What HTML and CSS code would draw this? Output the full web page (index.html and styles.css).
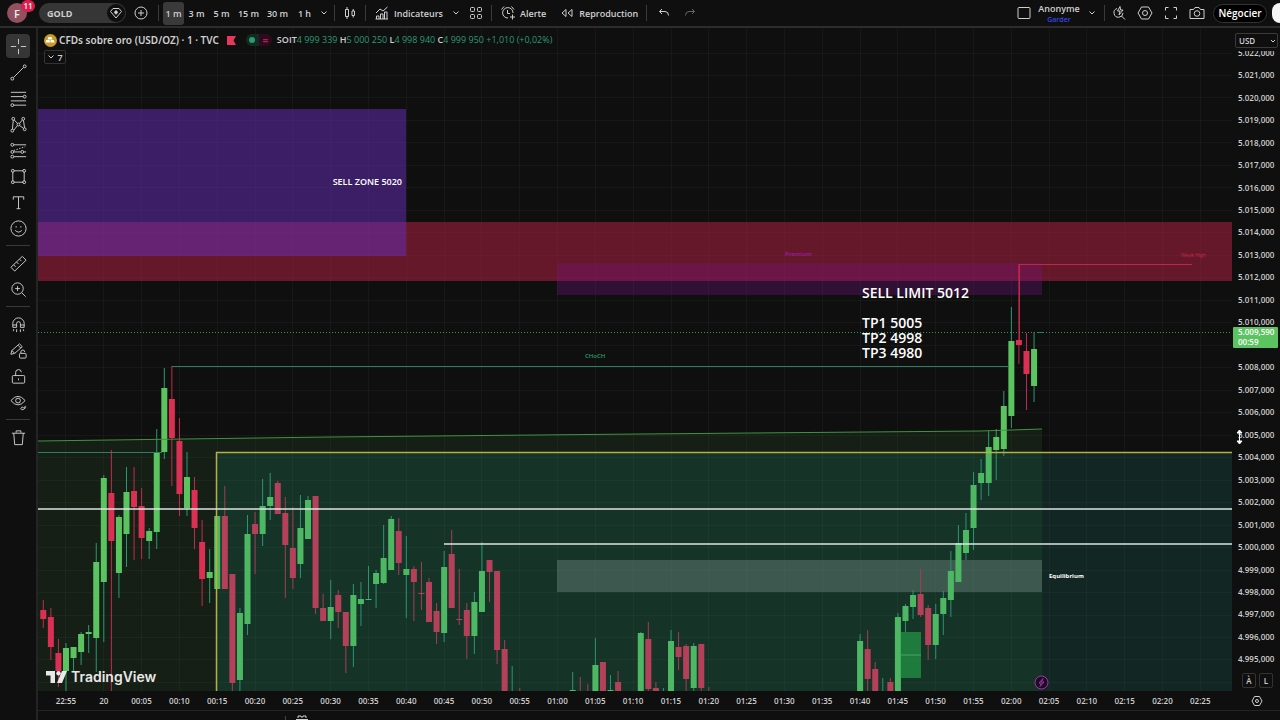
FILE: index.html
```
<!DOCTYPE html>
<html lang="fr">
<head>
  <meta charset="UTF-8" />
  <meta name="viewport" content="width=device-width, initial-scale=1.0" />
  <title>GOLD - TradingView</title>
  <link rel="stylesheet" href="styles.css">
</head>
<body>
  <header class="topbar">
    <button class="avatar" aria-label="Menu">F<span class="badge">11</span></button>
    <button class="symbol">GOLD
      <span class="symbol-icon"><svg width="14" height="14" viewBox="0 0 14 14"><path d="M4 2.500h6l2.500 3L7 12 1.500 5.500z"/><path class="fill" d="M7 4l2.200 2.200L7 8.800 4.800 6.200z"/></svg></span>
    </button>
    <button class="icon-btn w26" aria-label="Comparer"><svg width="14" height="14" viewBox="0 0 14 14"><circle cx="7" cy="7" r="6"/><path d="M7 4v6M4 7h6"/></svg></button>
    <span class="sep"></span>
    <nav class="intervals">
      <button class="active">1 m</button>
      <button>3 m</button>
      <button>5 m</button>
      <button class="wide">15 m</button>
      <button class="wide">30 m</button>
      <button>1 h</button>
      <button class="more" aria-label="Plus"><svg width="8" height="6" viewBox="0 0 8 6"><path d="M1.500 1.500L4 4l2.500-2.500"/></svg></button>
    </nav>
    <span class="sep"></span>
    <button class="icon-btn w22" aria-label="Bougies"><svg width="12" height="14" viewBox="0 0 12 14"><path d="M1.500 3.500h3v7h-3zM3 1v2.500M3 10.500V13M8 5h2.500v4.500H8zM9.200 3v2M9.200 9.500v2"/></svg></button>
    <span class="sep"></span>
    <button class="text-btn"><svg width="16" height="14" viewBox="0 0 16 14"><path d="M2 7l4-4 3 2 4.500-4M2.500 13v-3H5v3M6.500 13V8H9v5M10.500 13V6H13v7M1.500 13H14"/></svg>Indicateurs</button>
    <button class="icon-btn w18" aria-label="Favoris"><svg width="8" height="6" viewBox="0 0 8 6"><path d="M1.500 1.500L4 4l2.500-2.500"/></svg></button>
    <button class="icon-btn w22" aria-label="Modèles"><svg width="14" height="14" viewBox="0 0 14 14"><rect x="1.500" y="1.500" width="4" height="4" rx="1"/><rect x="8.500" y="1.500" width="4" height="4" rx="1"/><rect x="1.500" y="8.500" width="4" height="4" rx="1"/><rect x="8.500" y="8.500" width="4" height="4" rx="1"/></svg></button>
    <span class="sep"></span>
    <button class="text-btn"><svg width="16" height="16" viewBox="0 0 16 16"><path d="M8 13A5.200 5.200 0 1 1 13 8M7.500 5v3.500H10M1.500 4.500l2.500-3M14 4.500l-2.500-3M12.500 9.500v5M10 12h5"/></svg>Alerte</button>
    <button class="text-btn"><svg width="16" height="12" viewBox="0 0 16 12"><path d="M7 2.500v7L3 6zM13 2.500v7L9 6z"/></svg>Reproduction</button>
    <span class="sep"></span>
    <button class="icon-btn w26" aria-label="Annuler"><svg width="12" height="12" viewBox="0 0 12 12"><path d="M4 2L1.500 4.500 4 7M1.500 4.500H7q3.500 0 3.500 4"/></svg></button>
    <button class="icon-btn w26 dim" aria-label="Rétablir"><svg width="12" height="12" viewBox="0 0 12 12"><path d="M8 2l2.500 2.500L8 7M10.500 4.500H5q-3.500 0-3.500 4"/></svg></button>

    <div class="topbar-right">
      <button class="icon-btn w26" aria-label="Disposition"><svg width="14" height="14" viewBox="0 0 14 14"><rect x="1" y="1.500" width="12" height="11" rx="1"/></svg></button>
      <button class="layout-name">Anonyme<span>Garder</span></button>
      <button class="icon-btn w22" aria-label="Dispositions"><svg width="8" height="6" viewBox="0 0 8 6"><path d="M1.500 1.500L4 4l2.500-2.500"/></svg></button>
      <span class="sep tight"></span>
      <button class="icon-btn w26" aria-label="Recherche rapide"><svg width="14" height="14" viewBox="0 0 14 14"><path d="M5 2.500a4.500 4.500 0 1 0 6 4.500M9.500 10l3.500 3.500M8 .5L5.500 5H8l-1 4 4-5H8.500z"/></svg></button>
      <button class="icon-btn w26" aria-label="Paramètres"><svg width="16" height="14" viewBox="0 0 16 14"><path d="M4.500 1h7L15 7l-3.500 6h-7L1 7z"/><circle cx="8" cy="7" r="2.500"/></svg></button>
      <button class="icon-btn w26" aria-label="Plein écran"><svg width="14" height="14" viewBox="0 0 14 14"><path d="M1.500 4.500v-3h3M9.500 1.500h3v3M12.500 9.500v3h-3M4.500 12.500h-3v-3"/></svg></button>
      <button class="icon-btn w26" aria-label="Capture"><svg width="16" height="14" viewBox="0 0 16 14"><path d="M1 3.500h3.500L6 1.500h4l1.500 2H15v9H1z"/><circle cx="8" cy="7.500" r="2.800"/></svg></button>
      <button class="trade">Négocier</button>
      <button class="publish" aria-label="Publier"></button>
    </div>
  </header>

  <aside class="tools">
    <button class="active" aria-label="Réticule"><svg viewBox="0 0 20 20"><path d="M10 2v5.500M10 12.500V18M2 10h5.500M12.500 10H18"/></svg></button>
    <button aria-label="Ligne de tendance"><svg viewBox="0 0 20 20"><circle cx="3.500" cy="16.500" r="1.500"/><circle cx="16.500" cy="3.500" r="1.500"/><path d="M4.700 15.300L15.300 4.700"/></svg></button>
    <button aria-label="Fibonacci"><svg viewBox="0 0 20 20"><path d="M2 3.500h16M2 8h13M2 12.500h16M5 17h13"/><circle cx="16.500" cy="8" r="1.500"/><circle cx="3.500" cy="17" r="1.500"/></svg></button>
    <button aria-label="Motifs"><svg viewBox="0 0 20 20"><circle cx="3.500" cy="16.500" r="1.500"/><circle cx="4.500" cy="4" r="1.500"/><circle cx="10" cy="10" r="1.500"/><circle cx="15" cy="4" r="1.500"/><circle cx="16.500" cy="15" r="1.500"/><path d="M3.600 15L4.500 5.500M5.500 5.200L9 9M11 9l3-3.700M15.200 5.500l1.200 8M5 16l4-5M11 11l4.200 3"/></svg></button>
    <button aria-label="Prévision"><svg viewBox="0 0 20 20"><circle cx="3.500" cy="4" r="1.500"/><circle cx="3.500" cy="11.500" r="1.500"/><circle cx="3.500" cy="16.500" r="1.500"/><circle cx="14" cy="11.500" r="1.500"/><path d="M5 4h13M5 11.500h7.500M5 16.500h13M15.500 11.500H18"/><path stroke-dasharray="1.500 1.500" d="M5 10l12-4"/></svg></button>
    <button aria-label="Rectangle"><svg viewBox="0 0 20 20"><path d="M5 4h10M5 16h10M4 5v10M16 5v10"/><circle cx="4" cy="4" r="1.500"/><circle cx="16" cy="4" r="1.500"/><circle cx="4" cy="16" r="1.500"/><circle cx="16" cy="16" r="1.500"/></svg></button>
    <button aria-label="Texte"><svg viewBox="0 0 20 20"><path d="M4.500 7V4h11v3M10 4v12.500M8 16.500h4"/></svg></button>
    <button aria-label="Emoji"><svg viewBox="0 0 20 20"><circle cx="10" cy="10" r="8"/><path d="M6.500 12q3.500 3.500 7 0M7.500 7.500v1.500M12.500 7.500v1.500"/></svg></button>
    <hr>
    <button aria-label="Mesure"><svg viewBox="0 0 20 20"><path d="M2 14L14 2.500l4 4L6 18zM5 11.500l2 2M8 8.500l2 2M11 5.500l2 2"/></svg></button>
    <button aria-label="Zoom avant"><svg viewBox="0 0 20 20"><circle cx="9" cy="9" r="6"/><path d="M13.500 13.500L17.500 17.500M9 6.500v5M6.500 9h5"/></svg></button>
    <hr>
    <button aria-label="Aimant"><svg viewBox="0 0 20 20"><path d="M4 13V9a6 6 0 0 1 12 0v4h-4V9a2 2 0 0 0-4 0v4zM4 10.500h4M12 10.500h4M5 15l-.5 2M8 15v3M12 15v3M15 15l.5 2"/></svg></button>
    <button aria-label="Rester en mode dessin"><svg viewBox="0 0 20 20"><path d="M2 14l1-4 8-7 3 3-8 7zM9.500 4.500l3 3M3 10l3 3"/><rect x="11" y="13" width="7" height="5" rx="1"/><path d="M12.500 13v-1.500a2 2 0 0 1 4 0"/></svg></button>
    <button aria-label="Verrouiller"><svg viewBox="0 0 20 20"><rect x="3.500" y="9" width="13" height="8" rx="1"/><path d="M7 9V6a3 3 0 0 1 6-.5M10 12v2"/></svg></button>
    <button aria-label="Masquer"><svg viewBox="0 0 20 20"><path d="M2 8q7.500-9 15 0-7.500 9-15 0z"/><circle cx="9.500" cy="8" r="2.500"/><path d="M12 17l2-2.500 1.500 1.500 2-2.500M13 17.500h2l3-2.500"/></svg></button>
    <hr>
    <button aria-label="Supprimer"><svg viewBox="0 0 20 20"><path d="M3 5.500h14M7.500 5V3h5v2M5 5.500l1 12h8l1-12"/></svg></button>
  </aside>

  <main class="chart">
    <svg class="plot" id="plot" viewBox="38 28 1194 663" preserveAspectRatio="xMinYMin slice">
      <g id="grid"></g>
      <rect class="sell-band" x="38" y="222" width="1194" height="59"/>
      <rect class="sell-zone" x="38" y="109" width="368" height="147"/>
      <rect class="order-block" x="557" y="263" width="485" height="32"/>
      <path class="trend-area" d="M38 441L330 437 640 434 980 431 1042 429V691H38z"/>
      <rect class="equilibrium" x="557" y="560" width="485" height="32"/>
      <g id="candles"></g>
      <path class="trend" d="M38 441L330 437 640 434 980 431 1042 429"/>
      <path class="structure" d="M38 452.500H162M172 366.500H1009"/>
      <rect class="demand" x="216" y="452" width="1016" height="239"/>
      <path class="weak-high" d="M1019.500 340V264.500H1192"/>
      <rect class="position" x="900" y="632" width="21" height="46"/>
      <path class="position-line" d="M900 655H921"/>
      <path class="range" d="M216.500 691V452.500H1232"/>
      <path class="level" d="M38 509H1232M444 544H1232"/>
      <path class="last-price" d="M38 332.500H1232"/>
      <path class="structure" d="M1038 332.500H1044"/>
      <text class="zone-label" x="402" y="185" text-anchor="end">SELL ZONE 5020</text>
      <text class="order" x="862" y="298">SELL LIMIT 5012</text>
      <text class="order" x="862" y="328">TP1 5005</text>
      <text class="order" x="862" y="343">TP2 4998</text>
      <text class="order" x="862" y="358">TP3 4980</text>
      <text class="note choch" x="585" y="358">CHoCH</text>
      <text class="note premium" x="785" y="256">Premium</text>
      <text class="note weak" x="1181" y="257">Weak High</text>
      <text class="note equi" x="1049" y="578">Equilibrium</text>
      <g class="event"><circle cx="1041.500" cy="682.500" r="6.500"/><path d="M1043 678.500l-4 4.500h2.500l-1.500 3.500 4-4.500h-2.500z"/></g>
      <g class="brand">
        <path d="M46 671h9v12h-4.500v-7.500H46zM62 671h5l-5 12h-5z"/><circle cx="58.500" cy="673.200" r="2.200"/>
        <text x="71" y="682">TradingView</text>
      </g>
    </svg>
    <div class="legend">
      <div class="legend-row">
        <span class="gold-icon"><svg width="12" height="12" viewBox="0 0 12 12"><path d="M4.500 3h3l1 2.500h-5zM2.200 6h3.300l.5 2.500H1.500zM6.500 6h3.300l.7 2.500H6.500z"/></svg></span>
        <h1>CFDs sobre oro (USD/OZ) · 1 · TVC</h1>
        <svg class="flag" width="9" height="9" viewBox="0 0 9 9"><path d="M0 0h9L6.500 4.500 9 9H0z"/></svg>
        <span class="status"><i></i><b>=</b></span>
        <p class="ohlc">SOIT<em>4 999 339</em> H<em>5 000 250</em> L<em>4 998 940</em> C<em>4 999 950</em> <em>+1,010 (+0,02%)</em></p>
      </div>
      <button class="collapse"><svg width="8" height="6" viewBox="0 0 8 6"><path d="M1.500 1.500L4 4l2.500-2.500"/></svg>7</button>
    </div>
  </main>

  <section class="price-axis">
    <div class="currency">
      <select aria-label="Devise"><option>USD</option></select>
      <svg width="8" height="6" viewBox="0 0 8 6"><path d="M2 2l2 2 2-2"/></svg>
    </div>
    <div class="price-window"><ul id="prices"></ul></div>
    <div class="scale-modes"><button>À</button><button>L</button></div>
    <div class="price-tag">5.009,590<span>00:59</span></div>
    <svg class="cursor" width="9" height="16" viewBox="0 0 9 16"><path d="M4.500 3v10M2 4l2.500-3L7 4zM2 12l2.500 3L7 12z"/></svg>
  </section>

  <ul class="time-axis" id="times"></ul>
  <button class="axis-settings" aria-label="Paramètres de l'échelle"><svg width="12" height="12" viewBox="0 0 12 12"><path d="M3.500 1.500h5L11 6 8.500 10.500h-5L1 6z"/><circle cx="6" cy="6" r="1.500"/></svg></button>
  <footer class="bottom"><span class="bottom-sep"></span><svg width="14" height="5" viewBox="0 0 14 5"><path d="M1 4.500h12M3 3V1h3v1h2V1h3v2"/></svg></footer>

  <script src="chart.js"></script>
</body>
</html>
```
FILE: styles.css
```
:root {
  --bg: #0f0f0f;
  --line: #2c2c2c;
  --text: #cfcfcf;
  --up: #5bc460;
  --up-wick: #2c9a72;
  --down: #db2f54;
}

* {
  box-sizing: border-box;
}

body {
  margin: 0;
  min-height: 100vh;
  display: grid;
  grid-template-columns: 38px 1fr 48px;
  grid-template-rows: 28px 1fr 20px 9px;
  background: var(--bg);
  color: var(--text);
  font-family: "Open Sans", "Noto Sans", sans-serif;
  font-size: 10px;
  overflow: hidden;
}

button, select {
  font: inherit;
  color: inherit;
  background: none;
  border: 0;
  padding: 0;
  cursor: pointer;
}

svg {
  fill: none;
  stroke: currentColor;
  flex: none;
}

ul, p, h1 {
  list-style: none;
  margin: 0;
  padding: 0;
}

/* top bar */
.topbar {
  grid-column: 1 / -1;
  display: flex;
  align-items: center;
  padding-left: 7px;
  border-bottom: 2px solid var(--line);
  font-weight: 600;
  white-space: nowrap;
  overflow: hidden;
}

.topbar button {
  display: flex;
  align-items: center;
  justify-content: center;
  flex: none;
}

.topbar .avatar {
  position: relative;
  width: 20px;
  height: 20px;
  border-radius: 50%;
  background: #93505f;
  color: #eee;
  font-size: 11px;
}

.badge {
  position: absolute;
  top: -3px;
  left: 14px;
  width: 14px;
  height: 12px;
  border-radius: 6px;
  background: #d81f4d;
  color: #fff;
  font-size: 8px;
  line-height: 12px;
}

.topbar .symbol {
  justify-content: space-between;
  width: 87px;
  height: 20px;
  margin-left: 12px;
  padding: 0 1px 0 8px;
  border-radius: 10px;
  background: #363636;
  font-size: 9px;
  font-weight: 700;
}

.symbol-icon {
  display: flex;
  align-items: center;
  justify-content: center;
  width: 18px;
  height: 18px;
  border-radius: 50%;
  background: var(--bg);
}

.symbol-icon .fill {
  fill: currentColor;
  stroke: none;
}

.symbol + .icon-btn {
  margin-left: 2px;
}

.sep {
  flex: none;
  width: 1px;
  height: 16px;
  margin: 0 4px;
  background: #3a3a3a;
}

.sep.tight {
  margin: 0 1px;
}

.w26 {
  width: 26px;
}

.w22 {
  width: 22px;
}

.w18 {
  width: 18px;
}

.dim {
  color: #666;
}

.intervals {
  display: flex;
}

.intervals button {
  width: 25px;
  height: 23px;
  font-size: 9px;
}

.intervals .active {
  width: 21px;
  border-radius: 3px;
  background: #3a3a3a;
}

.intervals .wide {
  width: 29px;
}

.intervals .more {
  width: 13px;
}

.text-btn {
  gap: 4px;
  padding: 0 4px;
  font-size: 9px;
}

.text-btn + .text-btn {
  margin-left: 5px;
}

.topbar-right {
  display: flex;
  align-items: center;
  margin-left: auto;
}

.topbar .layout-name {
  flex-direction: column;
  width: 44px;
  font-size: 9px;
  line-height: 12px;
}

.layout-name span {
  color: #3548e8;
  font-size: 7px;
  line-height: 9px;
}

.topbar .trade {
  width: 54px;
  height: 19px;
  margin: 0 5px 0 3px;
  border: 1px solid #333;
  border-radius: 10px;
  background: #000;
  color: #fff;
  font-size: 10px;
}

.topbar .publish {
  width: 8px;
  height: 20px;
  border-radius: 10px 0 0 10px;
  background: #f5f5f5;
}

/* drawing tools */
.tools {
  grid-row: 2 / -1;
  display: flex;
  flex-direction: column;
  align-items: center;
  gap: 2px;
  padding: 6px 0;
  border-right: 2px solid #242424;
}

.tools button {
  width: 24px;
  height: 24px;
  border-radius: 4px;
  display: flex;
  align-items: center;
  justify-content: center;
}

.tools svg {
  width: 19px;
  height: 19px;
}

.tools .active {
  background: #363636;
}

.tools hr {
  width: 24px;
  margin: 3px 0;
  border: 0;
  border-top: 1px solid #3a3a3a;
}

/* chart */
.chart {
  position: relative;
  min-width: 0;
  min-height: 0;
  overflow: hidden;
}

.plot {
  position: absolute;
  width: 100%;
  height: 100%;
}

.plot rect, .plot text {
  stroke: none;
}

#grid path {
  stroke: rgba(255, 255, 255, 0.035);
}

.up { fill: var(--up); }
.down { fill: var(--down); }
.up-wick { stroke: var(--up-wick); }
.down-wick { stroke: #c42c4c; }

.sell-band { fill: rgba(230, 38, 80, 0.4); }
.sell-zone { fill: rgba(105, 45, 190, 0.5); }
.order-block { fill: rgba(125, 20, 142, 0.3); }
.trend-area { fill: rgba(90, 200, 100, 0.09); stroke: none; }
.trend { stroke: #3f9440; }
.structure { stroke: #2b8063; }
.demand { fill: rgba(30, 136, 115, 0.2); }
.equilibrium { fill: rgba(240, 240, 240, 0.22); }
.weak-high { stroke: #c22846; }
.position { fill: rgba(40, 180, 80, 0.55); }
.position-line { stroke: #48a860; }
.range { stroke: #b5b045; stroke-width: 1.5; }
.level { stroke: #dde4e0; stroke-width: 1.5; }
.last-price { stroke: #3d8f55; stroke-dasharray: 1 2; }

.zone-label {
  fill: #fff;
  font-size: 9px;
  font-weight: 600;
}

.order {
  fill: #fff;
  font-size: 14px;
  font-weight: 600;
}

.note { font-size: 6px; }
.choch { fill: #2c9a72; font-weight: 600; }
.premium { fill: #a01ab0; font-weight: 600; }
.weak { fill: #c22846; font-size: 5px; }
.equi { fill: #fff; font-weight: 700; }

.event {
  fill: #1d0d20;
  stroke: #9c34ad;
}

.brand {
  fill: #e8e8e8;
  stroke: none;
  font-family: Inter, sans-serif;
  font-size: 14px;
  font-weight: 600;
}

.legend {
  position: absolute;
  top: 5px;
  left: 6px;
}

.legend-row {
  display: flex;
  align-items: center;
  height: 14px;
  white-space: nowrap;
}

.gold-icon {
  display: flex;
  width: 13px;
  height: 13px;
  margin-right: 2px;
  border-radius: 50%;
  background: #c99a25;
}

.gold-icon svg {
  fill: #fff;
  stroke: none;
}

.legend h1 {
  font-family: "Noto Sans", sans-serif;
  font-size: 10px;
  font-weight: 600;
  line-height: 12px;
}

.flag {
  margin: 0 10px 0 8px;
  fill: #e5385b;
  stroke: none;
}

.status {
  display: flex;
  align-items: center;
  justify-content: space-around;
  width: 26px;
  height: 12px;
  border-radius: 6px;
  background: linear-gradient(90deg, #122a20 50%, #2c0b1a 50%);
}

.status i {
  width: 6px;
  height: 6px;
  border-radius: 50%;
  background: #2c9a72;
}

.status b {
  color: #b3215a;
  line-height: 10px;
}

.ohlc {
  margin-left: 5px;
  font-size: 9px;
  font-weight: 600;
  line-height: 12px;
}

.ohlc em {
  color: #2c9a72;
  font-style: normal;
  font-weight: 500;
}

.collapse {
  display: flex;
  align-items: center;
  justify-content: center;
  gap: 2px;
  width: 22px;
  height: 14px;
  margin-top: 3px;
  border: 1px solid #333;
  border-radius: 2px;
  font-size: 9px;
  font-weight: 600;
}

/* scales */
.price-axis {
  position: relative;
  display: flex;
  flex-direction: column;
  min-height: 0;
  font-size: 8px;
  font-weight: 600;
}

.currency {
  position: relative;
  flex: none;
  height: 15px;
  margin: 5px 2px 0 3px;
}

.currency select {
  display: block;
  appearance: none;
  width: 100%;
  height: 100%;
  padding-left: 3px;
  border: 1px solid #3a3a3a;
  border-radius: 2px;
  text-align: left;
}

.currency svg {
  position: absolute;
  right: 1px;
  top: 5px;
  pointer-events: none;
}

.price-window {
  display: flex;
  flex: 1;
  min-height: 0;
  margin-top: 3px;
  overflow: hidden;
}

.price-window ul {
  display: flex;
  flex-direction: column;
  flex: 1;
  margin: -10px 0 2px;
}

.price-window li {
  display: flex;
  flex: 1;
  align-items: center;
  padding-left: 6px;
}

.scale-modes {
  display: flex;
  gap: 3px;
  padding: 1px 0 3px 10px;
}

.scale-modes button {
  width: 14px;
  height: 15px;
  border: 1px solid #333;
  border-radius: 2px;
}

.price-tag {
  position: absolute;
  top: 299px;
  left: 1px;
  width: 45px;
  padding-left: 5px;
  border-radius: 1px;
  background: var(--up);
  color: #fff;
  line-height: 10px;
}

.price-tag span {
  display: block;
  height: 11px;
}

.cursor {
  position: absolute;
  top: 401px;
  left: 3px;
  color: #fff;
  fill: #fff;
}

.time-axis {
  display: flex;
  align-items: center;
  padding: 0 13px 0 9px;
  font-size: 8px;
  font-weight: 600;
  border-bottom: 1px solid #242424;
}

.time-axis li {
  flex: 1;
  min-width: 0;
  text-align: center;
}

.axis-settings {
  display: flex;
  align-items: center;
  justify-content: center;
  padding-left: 2px;
  border-bottom: 1px solid #242424;
}

.bottom {
  grid-column: 2 / -1;
  display: flex;
  align-items: flex-end;
  gap: 9px;
  padding-left: 247px;
}

.bottom-sep {
  width: 1px;
  height: 4px;
  background: #444;
}
```
FILE: chart.js
```
const NS = "http://www.w3.org/2000/svg";
const BAR = 7.563;
const START = 103.3;

// bar index, high, body top, body bottom, low, 1 = up
const candles = [
  [-8,600,610,619,628,0],[-7,608,617,647,660,0],[-6,639,653,671,687,0],[-5,643,648,671,691,1],
  [-4,647,647,658,671,1],[-3,632,634,652,665,1],[-2,625,632,634,653,1],[-1,543,562,638,672,1],
  [0,475,478,582,642,1],[1,450,493,541,691,0],[2,515,517,573,598,1],[3,467,492,534,567,1],
  [4,467,491,507,560,0],[5,488,506,538,559,0],[6,528,531,541,559,1],[7,429,452,532,549,1],
  [8,368,388,452,459,1],[9,366,399,438,486,0],[10,418,441,494,516,0],[11,452,477,508,516,1],
  [12,477,490,528,549,0],[13,520,542,579,606,0],[14,549,572,578,603,1],[15,516,516,589,589,1],
  [16,486,516,589,589,0],[17,574,574,683,691,0],[18,608,613,680,691,1],[19,515,534,624,635,1],
  [20,512,524,534,574,0],[21,479,506,534,546,1],[22,473,497,506,520,1],[23,481,483,514,514,0],
  [24,497,513,545,598,0],[25,507,548,578,589,0],[26,495,528,564,578,1],[27,496,500,539,539,1],
  [28,496,496,608,614,0],[29,594,608,621,621,0],[30,580,607,621,639,1],[31,590,595,612,628,0],
  [32,612,612,646,673,0],[33,584,595,646,667,1],[34,582,599,604,626,1],[35,566,599,600,600,1],
  [36,570,573,584,608,1],[37,525,558,583,584,1],[38,516,519,570,570,1],[39,518,531,563,575,0],
  [40,536,569,575,618,1],[41,566,569,582,621,0],[42,562,593,594,610,0],[43,578,582,622,622,0],
  [44,603,611,632,644,0],[45,551,567,633,642,1],[46,530,554,608,608,0],[47,569,619,620,625,0],
  [48,603,610,636,659,0],[49,592,602,636,654,1],[50,542,571,612,612,1],[51,560,560,572,602,0],
  [52,571,571,650,664,0],[53,640,649,691,691,0],[54,666,691,691,691,1],[55,688,691,691,691,0],
  [62,672,690,691,691,1],[63,677,691,691,691,0],[64,684,691,691,691,0],[65,638,665,691,691,1],
  [66,662,662,691,691,0],[67,675,690,691,691,1],[68,671,682,691,691,0],[71,632,633,691,691,1],
  [72,622,639,689,691,0],[73,682,688,691,691,0],[74,688,691,691,691,1],[75,630,641,691,691,1],
  [76,632,647,657,670,0],[77,644,646,679,691,0],[78,643,646,688,691,1],[79,644,644,688,691,0],
  [80,687,691,691,691,0],[100,634,641,691,691,1],[101,630,649,679,691,0],[102,662,669,691,691,0],
  [103,678,691,691,691,1],[104,678,682,691,691,0],[105,613,617,691,691,1],[106,604,606,621,632,1],
  [107,590,595,607,619,1],[108,569,594,615,617,0],[109,605,608,645,660,0],[110,604,614,645,659,1],
  [111,591,598,614,635,1],[112,551,571,600,617,1],[113,525,543,582,582,1],[114,513,530,553,560,1],
  [115,472,485,528,550,1],[116,459,473,483,500,1],[117,431,447,483,496,1],[118,429,437,450,480,1],
  [119,391,406,449,456,1],[120,307,341,416,428,1],[121,264,340,345,364,0],[122,333,351,374,410,0],
  [123,332,349,386,402,1]
];

function add(parent, tag, attrs) {
  const el = document.createElementNS(NS, tag);
  for (const key in attrs) el.setAttribute(key, attrs[key]);
  parent.appendChild(el);
}

function addLabel(list, text) {
  const li = document.createElement("li");
  li.textContent = text;
  list.appendChild(li);
}

const grid = document.getElementById("grid");
const times = document.getElementById("times");
const prices = document.getElementById("prices");

for (let m = -5; m <= 145; m += 5) {
  const x = Math.round(START + m * BAR) + 0.5;
  add(grid, "path", { d: `M${x} 28V691` });
  const label = String(Math.floor(m / 60)).padStart(2, "0") + ":" + String(m % 60).padStart(2, "0");
  addLabel(times, m < 0 ? "22:55" : m === 0 ? "20" : label);
}

for (let p = 5022; p >= 4994; p--) {
  const y = Math.round(75 + (5021 - p) * 22.48) + 0.5;
  add(grid, "path", { d: `M38 ${y}H1232` });
  // 5009 sits under the last price tag
  const label = String(p)[0] + "." + String(p).slice(1) + ",000";
  if (p > 4994) addLabel(prices, p === 5009 ? "" : label);
}

const group = document.getElementById("candles");
candles.forEach(([i, high, top, bottom, low, up]) => {
  const x = START + i * BAR + 0.5;
  const name = up ? "up" : "down";
  add(group, "path", { class: name + "-wick", d: `M${x} ${high}V${low}` });
  if (top < 691) {
    add(group, "rect", { class: name, x: x - 3, y: top, width: 6, height: Math.max(bottom - top, 1) });
  }
});
```
